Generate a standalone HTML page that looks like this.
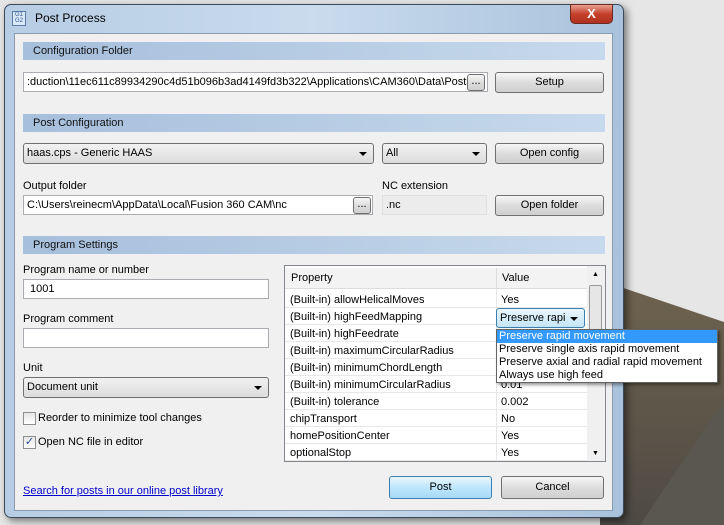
<!DOCTYPE html>
<html><head><style>
*{box-sizing:border-box}
body{margin:0;width:724px;height:525px;overflow:hidden;font-family:"Liberation Sans",sans-serif;font-size:11px;color:#000;position:relative;background:#e6e6e6}
.a{position:absolute}
.win{left:4px;top:4px;width:620px;height:514px;border:1px solid #3a4a5a;border-radius:7px;background:linear-gradient(90deg,#b7cde4,#c9dbed 50%,#a9c2dc);box-shadow:3px 3px 8px rgba(0,0,0,.5)}
.client{left:14px;top:33px;width:599px;height:478px;background:#f0f0f0;border:1px solid #8a9bb0}
.hdr{height:18px;background:linear-gradient(90deg,#a6bfdc,#c7d9ec);padding-left:10px;line-height:18px;font-size:11px;color:#111;width:582px;left:23px}
.fld{background:#fff;border:1px solid #abadb3;height:20px;line-height:18px;padding-left:3px;white-space:nowrap;overflow:hidden}
.btn{border:1px solid #707070;border-radius:3px;background:linear-gradient(#f6f6f6,#dddddd 50%,#cfcfcf);text-align:center;line-height:19px;height:21px}
.cmb{border:1px solid #707070;border-radius:3px;background:linear-gradient(#f2f2f2,#dcdcdc);height:21px;line-height:19px;padding-left:3px}
.cmb:after{content:"";position:absolute;right:6px;top:8px;border:4px solid transparent;border-top:4px solid #000}
.row{left:285px;width:302px;height:17px;border-bottom:1px solid #e8e8e8;line-height:18px}
.row span{position:absolute;left:5px}.row b{font-weight:normal;position:absolute;left:216px}
.cb{width:13px;height:13px;border:1px solid #8e8f8f;background:linear-gradient(#e6e6e6,#fff)}
</style></head><body>
<div class="a" style="left:0;top:0;width:724px;height:525px;background:linear-gradient(180deg,#7d735f,#6a604d 60%,#4e4a44);clip-path:polygon(600px 280px,724px 322px,724px 525px,600px 525px)"></div>
<div class="a" style="left:0;top:0;width:724px;height:525px;background:#5a5650;clip-path:polygon(724px 400px,724px 525px,640px 525px)"></div>
<div class="a win"></div>
<div class="a" style="left:570px;top:4px;width:43px;height:20px;border-radius:0 0 5px 5px;background:linear-gradient(#e8a08f,#c4402a 50%,#b03020);border:1px solid #6a2a20;color:#fff;text-align:center;font-weight:bold;font-size:13px;line-height:18px">X</div>
<div class="a" style="left:12px;top:11px;width:14px;height:15px;background:#dbe8f5;border:1px solid #5a7da5;font-size:6px;line-height:6px;color:#2a5a9a;text-align:center">G1<br>G2</div>
<div class="a" style="left:35px;top:11px;font-size:12px">Post Process</div>
<div class="a client"></div>
<div class="a hdr" style="top:42px">Configuration Folder</div>
<div class="a fld" style="left:23px;top:72px;width:465px">:duction\11ec611c89934290c4d51b096b3ad4149fd3b322\Applications\CAM360\Data\Posts</div>
<div class="a btn" style="left:467px;top:74px;width:18px;height:17px;line-height:13px">...</div>
<div class="a btn" style="left:495px;top:72px;width:109px">Setup</div>
<div class="a hdr" style="top:114px">Post Configuration</div>
<div class="a cmb" style="left:23px;top:143px;width:351px">haas.cps - Generic HAAS</div>
<div class="a cmb" style="left:382px;top:143px;width:105px">All</div>
<div class="a btn" style="left:495px;top:143px;width:109px">Open config</div>
<div class="a" style="left:23px;top:180px">Output folder</div>
<div class="a" style="left:382px;top:180px">NC extension</div>
<div class="a fld" style="left:23px;top:195px;width:350px">C:\Users\reinecm\AppData\Local\Fusion 360 CAM\nc</div>
<div class="a btn" style="left:353px;top:197px;width:18px;height:17px;line-height:13px">...</div>
<div class="a fld" style="left:382px;top:195px;width:105px;background:#ececec;border-color:#e0e0e0">.nc</div>
<div class="a btn" style="left:495px;top:195px;width:109px">Open folder</div>
<div class="a hdr" style="top:236px">Program Settings</div>
<div class="a" style="left:23px;top:264px">Program name or number</div>
<div class="a fld" style="left:23px;top:279px;width:246px;padding-left:6px">1001</div>
<div class="a" style="left:23px;top:313px">Program comment</div>
<div class="a fld" style="left:23px;top:328px;width:246px"></div>
<div class="a" style="left:23px;top:362px">Unit</div>
<div class="a cmb" style="left:23px;top:377px;width:246px">Document unit</div>
<div class="a cb" style="left:23px;top:412px"></div>
<div class="a" style="left:38px;top:412px">Reorder to minimize tool changes</div>
<div class="a cb" style="left:23px;top:436px;color:#2a4a9a;font-size:11px;line-height:11px;text-align:center">✓</div>
<div class="a" style="left:38px;top:436px">Open NC file in editor</div>
<div class="a" style="left:23px;top:485px;color:#0000cc;text-decoration:underline">Search for posts in our online post library</div>
<div class="a" style="left:284px;top:265px;width:322px;height:197px;background:#fff;border:1px solid #828790"></div>
<div class="a" style="left:285px;top:268px;width:302px;height:21px;background:#f3f3f3;border-bottom:1px solid #ddd;line-height:21px"><span class="a" style="left:6px">Property</span><span class="a" style="left:211px;border-left:1px solid #ddd;padding-left:5px;height:21px">Value</span></div>
<div class="a" style="left:496px;top:289px;width:1px;height:172px;background:#e6e6e6"></div>
<div class="a" style="left:587px;top:266px;width:18px;height:195px;background:#f0f0f0"></div>
<div class="a" style="left:589px;top:285px;width:13px;height:58px;border:1px solid #999;border-radius:2px;background:#e6e6e6"></div>
<div class="a" style="left:592px;top:271px;font-size:7px">▲</div>
<div class="a" style="left:592px;top:450px;font-size:7px">▼</div>
<div class="a row" style="top:291px"><span>(Built-in) allowHelicalMoves</span><b>Yes</b></div>
<div class="a row" style="top:308px"><span>(Built-in) highFeedMapping</span></div>
<div class="a row" style="top:325px"><span>(Built-in) highFeedrate</span></div>
<div class="a row" style="top:342px"><span>(Built-in) maximumCircularRadius</span></div>
<div class="a row" style="top:359px"><span>(Built-in) minimumChordLength</span></div>
<div class="a row" style="top:376px"><span>(Built-in) minimumCircularRadius</span><b>0.01</b></div>
<div class="a row" style="top:393px"><span>(Built-in) tolerance</span><b>0.002</b></div>
<div class="a row" style="top:410px"><span>chipTransport</span><b>No</b></div>
<div class="a row" style="top:427px"><span>homePositionCenter</span><b>Yes</b></div>
<div class="a row" style="top:444px"><span>optionalStop</span><b>Yes</b></div>
<div class="a cmb" style="left:496px;top:308px;width:89px;height:20px;border-color:#3c7fb1;background:linear-gradient(#eaf6fd,#c4e5f6);line-height:18px;overflow:hidden;white-space:nowrap">Preserve rapi</div>
<div class="a" style="left:496px;top:329px;width:222px;height:54px;background:#fff;border:1px solid #646464;box-shadow:2px 2px 3px rgba(0,0,0,.4);line-height:13px">
<div style="background:#3399ff;color:#fff;padding-left:2px">Preserve rapid movement</div>
<div style="padding-left:2px">Preserve single axis rapid movement</div>
<div style="padding-left:2px">Preserve axial and radial rapid movement</div>
<div style="padding-left:2px">Always use high feed</div></div>
<div class="a btn" style="left:389px;top:476px;width:103px;height:23px;line-height:21px;border-color:#3c7fb1;background:linear-gradient(#eaf6fd,#bee6fd 50%,#a7d9f5)">Post</div>
<div class="a btn" style="left:501px;top:476px;width:103px;height:23px;line-height:21px">Cancel</div>
</body></html>
